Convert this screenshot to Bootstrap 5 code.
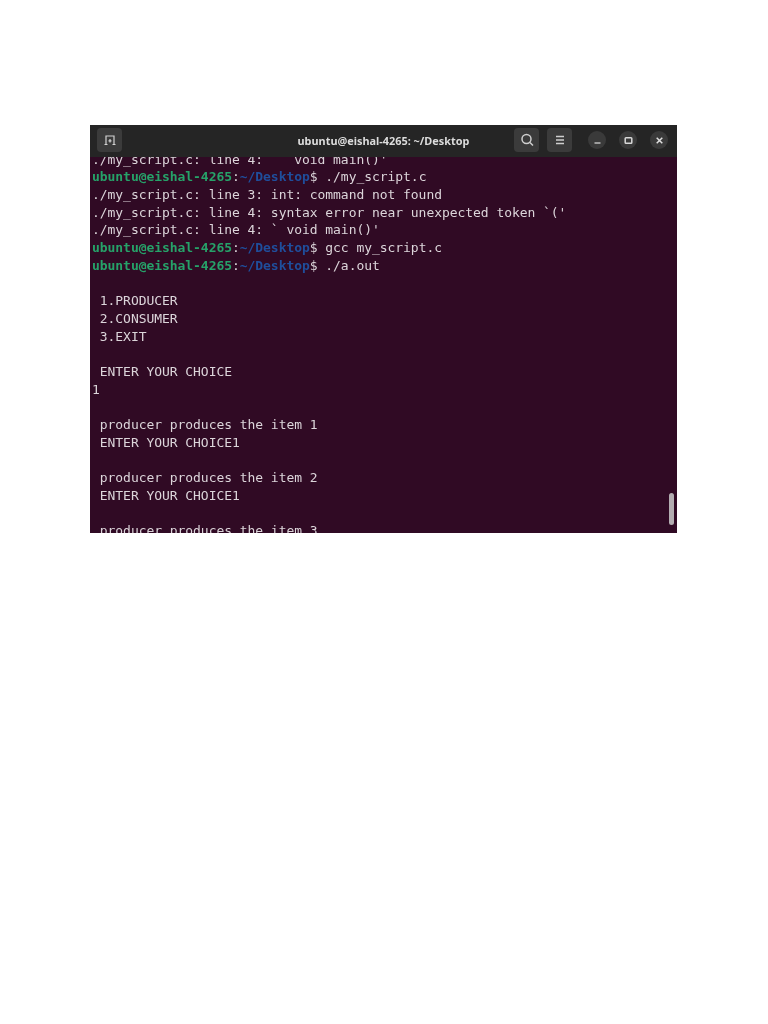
<!DOCTYPE html>
<html lang="en">
<head>
<meta charset="utf-8">
<title>Terminal</title>
<link href="https://cdn.jsdelivr.net/npm/bootstrap@5.3.0/dist/css/bootstrap.min.css" rel="stylesheet">
<style>
body{background:#fff;}
.term-win{width:587px;height:408px;margin:125px 0 0 90px;background:#300a24;}
.term-head{height:32px;background:#252525;padding:0 9px 2px 7px;color:#d2d2d2;filter:blur(.5px);}
.head-btn{width:25px;height:24px;background:#3b3b3b;border-radius:4px;}
.win-btn{width:18px;height:18px;background:#3a3a3a;border-radius:50%;}
.win-gap{margin-left:13px;}
.head-title{font:700 10.9px "Noto Sans","Liberation Sans",sans-serif;color:#dcdcdc;left:0;right:0;top:0;bottom:2px;pointer-events:none;}
.term-body{height:376px;filter:blur(.5px);}
.term-lines{margin:-6.500px 0 0 2px;font:13px/17.7px "DejaVu Sans Mono",monospace;letter-spacing:-.05px;color:#dcd5da;white-space:pre;}
.p-user{color:#26a269;font-weight:700;}
.p-path{color:#1f4e9c;font-weight:700;}
.term-thumb{width:5px;height:32px;right:3px;bottom:8px;background:#b3adb1;border-radius:3px;}
</style>
</head>
<body>
<div class="term-win d-flex flex-column overflow-hidden">
  <div class="term-head d-flex align-items-center position-relative">
    <div class="head-btn d-flex align-items-center justify-content-center">
      <svg width="14" height="14" viewBox="0 0 14 14" fill="none" stroke="#d2d2d2" stroke-width="1.200"><path d="M3 11.500V3h8v8.500M1.500 11.500h3M9.500 11.500h3M7 6v3.500M5.500 7.800h3"/></svg>
    </div>
    <div class="head-title position-absolute d-flex align-items-center justify-content-center">ubuntu@eishal-4265: ~/Desktop</div>
    <div class="ms-auto d-flex align-items-center">
      <div class="head-btn d-flex align-items-center justify-content-center me-2">
        <svg width="14" height="14" viewBox="0 0 14 14" fill="none" stroke="#cfcfcf" stroke-width="1.500"><circle cx="6.500" cy="6" r="4.500"/><path d="M10 9.500l3 3"/></svg>
      </div>
      <div class="head-btn d-flex align-items-center justify-content-center">
        <svg width="10" height="10" viewBox="0 0 10 10" stroke="#cfcfcf" stroke-width="1.500"><path d="M1 1.500h8M1 5h8M1 8.500h8"/></svg>
      </div>
      <div class="win-btn d-flex align-items-center justify-content-center ms-3">
        <svg width="9" height="9" viewBox="0 0 9 9" stroke="#d2d2d2" stroke-width="1.300"><path d="M1.500 7h6"/></svg>
      </div>
      <div class="win-btn d-flex align-items-center justify-content-center win-gap">
        <svg width="9" height="9" viewBox="0 0 9 9" fill="none" stroke="#d8d8d8" stroke-width="1.500"><rect x="1.200" y="1.700" width="6.600" height="5.600" rx=".8"/></svg>
      </div>
      <div class="win-btn d-flex align-items-center justify-content-center win-gap">
        <svg width="9" height="9" viewBox="0 0 9 9" stroke="#e0e0e0" stroke-width="1.500"><path d="M1.700 1.700l5.600 5.600M7.300 1.700l-5.600 5.600"/></svg>
      </div>
    </div>
  </div>
  <div class="term-body position-relative overflow-hidden">
    <div class="term-lines">./my_script.c: line 4: `  void main()'
<span class="p-user">ubuntu@eishal-4265</span>:<span class="p-path">~/Desktop</span>$ ./my_script.c
./my_script.c: line 3: int: command not found
./my_script.c: line 4: syntax error near unexpected token `('
./my_script.c: line 4: ` void main()'
<span class="p-user">ubuntu@eishal-4265</span>:<span class="p-path">~/Desktop</span>$ gcc my_script.c
<span class="p-user">ubuntu@eishal-4265</span>:<span class="p-path">~/Desktop</span>$ ./a.out

 1.PRODUCER
 2.CONSUMER
 3.EXIT

 ENTER YOUR CHOICE
1

 producer produces the item 1
 ENTER YOUR CHOICE1

 producer produces the item 2
 ENTER YOUR CHOICE1

 producer produces the item 3</div>
    <div class="term-thumb position-absolute"></div>
  </div>
</div>
<script src="https://cdn.jsdelivr.net/npm/bootstrap@5.3.0/dist/js/bootstrap.bundle.min.js"></script>
</body>
</html>
